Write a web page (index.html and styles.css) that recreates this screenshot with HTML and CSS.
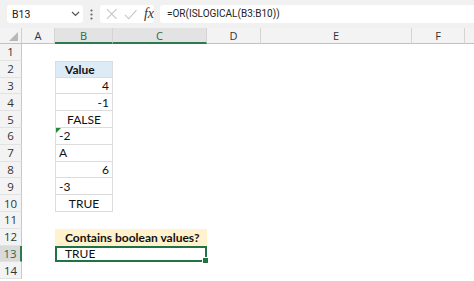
FILE: index.html
```html
<!DOCTYPE html>
<html lang="en">
<head>
    <meta charset="UTF-8">
    <title>ISLOGICAL example</title>
    <link rel="stylesheet" href="styles.css">
</head>
<body>
    <div class="formula-bar">
        <div class="name-box">
            <span>B13</span>
            <svg class="chevron" width="9" height="6" viewBox="0 0 9 6"><path d="M1 1 L4.5 4.5 L8 1" fill="none" stroke="#555" stroke-width="1.2"/></svg>
        </div>
        <div class="grip">
            <svg width="3" height="11" viewBox="0 0 3 11"><circle cx="1.5" cy="1.5" r="1.1" fill="#666"/><circle cx="1.5" cy="5.5" r="1.1" fill="#666"/><circle cx="1.5" cy="9.5" r="1.1" fill="#666"/></svg>
        </div>
        <div class="fx-box">
            <svg width="12" height="12" viewBox="0 0 12 12"><path d="M1 1 L11 11 M11 1 L1 11" stroke="#c4c4c4" stroke-width="1.1"/></svg>
            <svg width="14" height="11" viewBox="0 0 14 11"><path d="M1 6 L5 10 L13 1" fill="none" stroke="#c4c4c4" stroke-width="1.1"/></svg>
            <span class="fx">fx</span>
        </div>
        <div class="formula">=OR(ISLOGICAL(B3:B10))</div>
    </div>

    <div class="sheet">
        <div class="corner"><span class="corner-tri"></span></div>
        <div class="col-head">A</div>
        <div class="col-head active">B</div>
        <div class="col-head active">C</div>
        <div class="col-head">D</div>
        <div class="col-head">E</div>
        <div class="col-head">F</div>
        <div class="col-head last"></div>

        <div class="row-head">1</div>
        <div class="row-head">2</div>
        <div class="cell b table head">Value</div>
        <div class="row-head">3</div>
        <div class="cell b table num">4</div>
        <div class="row-head">4</div>
        <div class="cell b table num">-1</div>
        <div class="row-head">5</div>
        <div class="cell b table bool">FALSE</div>
        <div class="row-head">6</div>
        <div class="cell b table text"><span class="warn"></span>-2</div>
        <div class="row-head">7</div>
        <div class="cell b table text">A</div>
        <div class="row-head">8</div>
        <div class="cell b table num">6</div>
        <div class="row-head">9</div>
        <div class="cell b table text">-3</div>
        <div class="row-head">10</div>
        <div class="cell b table bool">TRUE</div>
        <div class="row-head">11</div>
        <div class="row-head">12</div>
        <div class="cell bc question">Contains boolean values?</div>
        <div class="row-head active">13</div>
        <div class="cell bc result">TRUE<span class="handle"></span></div>
        <div class="row-head">14</div>
    </div>
</body>
</html>
```

FILE: styles.css
```css
body {
    margin: 0;
    background-color: white;
    font-family: "Open Sans", "Noto Sans", sans-serif;
    overflow: hidden;
}
.formula-bar {
    display: flex;
    align-items: center;
    height: 28px;
    padding: 0 0 0 7px;
    background-color: #f1f1f1;
    box-sizing: border-box;
}
.name-box {
    display: flex;
    align-items: center;
    justify-content: space-between;
    width: 76px;
    height: 18px;
    padding: 0 3px 0 5px;
    box-sizing: border-box;
    background-color: white;
    border-radius: 3px;
    font-family: Roboto, sans-serif;
    font-size: 10.5px;
    color: #222;
}
.grip {
    display: flex;
    align-items: center;
    width: 17px;
    justify-content: center;
}
.fx-box {
    display: flex;
    align-items: center;
    gap: 7px;
    width: 54px;
    height: 18px;
    padding: 0 0 0 6px;
    box-sizing: border-box;
    background-color: white;
    border-radius: 3px;
}
.fx {
    font-family: "Liberation Serif", serif;
    font-style: italic;
    font-size: 14px;
    color: #333;
    margin-left: -1px;
}
.formula {
    flex: 1;
    height: 18px;
    margin-left: 6px;
    padding-left: 7px;
    background-color: white;
    border-radius: 3px 0 0 3px;
    font-family: Roboto, sans-serif;
    font-size: 10px;
    line-height: 18px;
    color: #222;
}
.sheet {
    display: grid;
    grid-template-columns: 22px 33px 58px 94px 54px 151px 53px 9px;
    grid-template-rows: 16px;
    grid-auto-rows: 16.8px;
    font-family: Lato, "Open Sans", sans-serif;
    font-size: 11px;
}
.corner {
    position: relative;
    background-color: #f3f3f3;
    border-right: 1px solid #d0d0d0;
    border-bottom: 1px solid #c2c2c2;
}
.corner-tri {
    position: absolute;
    right: 3px;
    bottom: 2px;
    width: 0;
    height: 0;
    border-left: 9px solid transparent;
    border-bottom: 9px solid #b8b8b8;
}
.col-head {
    display: flex;
    align-items: center;
    justify-content: center;
    background-color: #f3f3f3;
    border-right: 1px solid #d4d4d4;
    border-bottom: 1px solid #c2c2c2;
    font-family: "Open Sans", sans-serif;
    font-size: 11px;
    color: #333;
}
.col-head.active {
    background-color: #e3e3e3;
    border-bottom: 2px solid #2c7a4f;
    color: #2a6b46;
}
.col-head.last {
    border-right: none;
}
.row-head {
    grid-column: 1;
    display: flex;
    align-items: center;
    justify-content: center;
    background-color: #f3f3f3;
    border-right: 1px solid #c8c8c8;
    border-bottom: 1px solid #e2e2e2;
    font-family: "Open Sans", sans-serif;
    font-size: 11.5px;
    color: #333;
}
.row-head.active {
    background-color: #dadada;
    border-right: 2px solid #2c7a4f;
    color: #2a6b46;
}
.cell {
    display: flex;
    align-items: center;
    color: #111;
    font-size: 12px;
    box-sizing: border-box;
}
.b {
    grid-column: 3;
}
.bc {
    grid-column: 3 / span 2;
}
.table {
    border: 1px solid #dcdcdc;
    border-top: none;
    padding: 0 3px;
}
.table.head {
    border-top: 1px solid #dcdcdc;
    background-color: #ddebf7;
    font-weight: bold;
    padding-left: 9px;
}
.num {
    justify-content: flex-end;
}
.bool {
    justify-content: center;
}
.text {
    position: relative;
}
.warn {
    position: absolute;
    left: 0;
    top: 0;
    width: 0;
    height: 0;
    border-right: 5px solid transparent;
    border-top: 5px solid #1f8a3a;
}
.question {
    background-color: #fff2cc;
    font-weight: bold;
    padding-left: 10px;
}
.result {
    position: relative;
    border: 2px solid #217346;
    padding-left: 8px;
}
.handle {
    position: absolute;
    right: -4px;
    bottom: -4px;
    width: 5px;
    height: 5px;
    background-color: #217346;
    border: 1px solid white;
}
```
